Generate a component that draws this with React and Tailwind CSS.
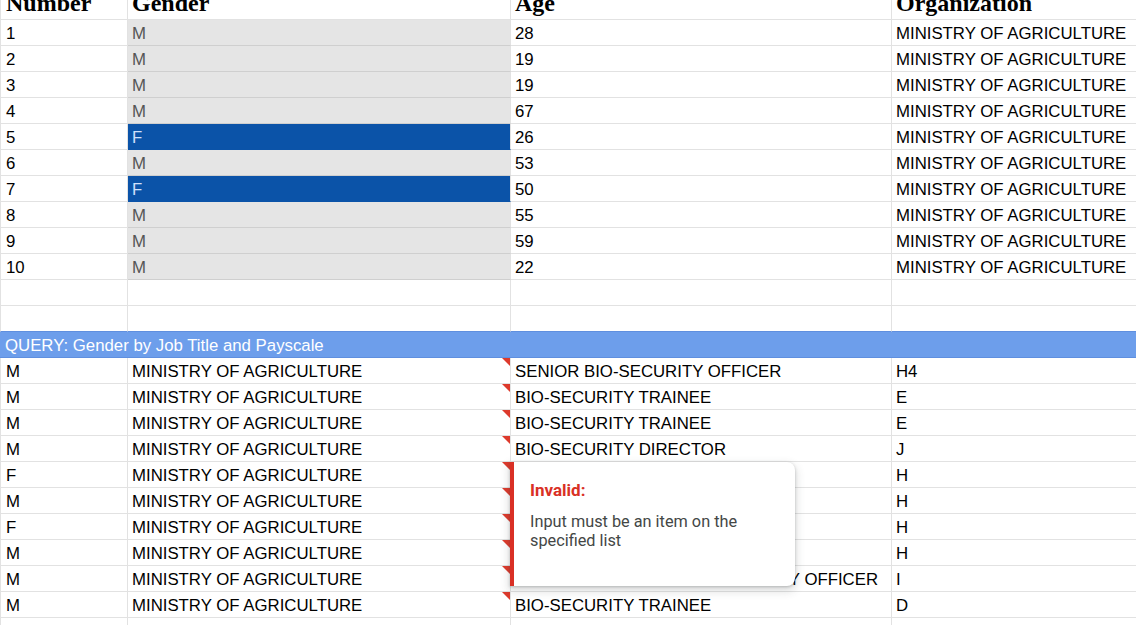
import React from "react";

const top = [
  ["1", "M", "28"],
  ["2", "M", "19"],
  ["3", "M", "19"],
  ["4", "M", "67"],
  ["5", "F", "26"],
  ["6", "M", "53"],
  ["7", "F", "50"],
  ["8", "M", "55"],
  ["9", "M", "59"],
  ["10", "M", "22"],
];

const bottom = [
  ["M", "SENIOR BIO-SECURITY OFFICER", "H4"],
  ["M", "BIO-SECURITY TRAINEE", "E"],
  ["M", "BIO-SECURITY TRAINEE", "E"],
  ["M", "BIO-SECURITY DIRECTOR", "J"],
  ["F", "", "H"],
  ["M", "", "H"],
  ["F", "", "H"],
  ["M", "", "H"],
  ["M", "SENIOR PRINCIPAL\u00a0 BIO-SECURITY OFFICER", "I"],
  ["M", "BIO-SECURITY TRAINEE", "D"],
];

const txt = "pl-[4px] pt-[5px] leading-[18px] text-[16.8px] whitespace-nowrap overflow-hidden";
const txtA = "pl-[5px] pt-[5px] leading-[18px] text-[16.8px] whitespace-nowrap overflow-hidden";

function Marker() {
  return (
    <div className="absolute top-0 right-0 w-0 h-0 border-t-[8px] border-l-[8px] border-t-[#dd3a2c] border-l-transparent" />
  );
}

export default function App() {
  return (
    <div className="relative w-[1136px] h-[625px] overflow-hidden bg-white text-black font-['Liberation_Sans',Arial,sans-serif]">
      {/* header row */}
      <div className="flex h-[20px] font-['Liberation_Serif',serif] font-bold text-[24px] leading-[24px]">
        <div className="w-[128px] shrink-0 border-l border-r border-b border-[#e2e2e2] pl-[5px] overflow-hidden">
          <div className="-mt-[9px]">Number</div>
        </div>
        <div className="w-[383px] shrink-0 border-r border-b border-[#e2e2e2] pl-[4px] overflow-hidden">
          <div className="-mt-[9px]">Gender</div>
        </div>
        <div className="w-[381px] shrink-0 border-r border-b border-[#e2e2e2] pl-[4px] overflow-hidden">
          <div className="-mt-[9px]">Age</div>
        </div>
        <div className="w-[260px] shrink-0 border-r border-b border-[#e2e2e2] pl-[4px] overflow-hidden">
          <div className="-mt-[9px]">Organization</div>
        </div>
      </div>

      {top.map(([n, g, a]) => (
        <div key={n} className="flex h-[26px]">
          <div className={`w-[128px] shrink-0 border-l border-r border-b border-[#e2e2e2] ${txtA}`}>{n}</div>
          {g === "F" ? (
            <div className={`w-[383px] shrink-0 border-r border-b border-[#0b53a8] border-r-[#e2e2e2] bg-[#0b53a8] text-[#cfe0fb] ${txt}`}>{g}</div>
          ) : (
            <div className={`w-[383px] shrink-0 border-r border-b border-[#cfcfcf] border-r-[#e2e2e2] bg-[#e5e5e5] text-[#555] ${txt}`}>{g}</div>
          )}
          <div className={`w-[381px] shrink-0 border-r border-b border-[#e2e2e2] ${txt}`}>{a}</div>
          <div className={`w-[260px] shrink-0 border-r border-b border-[#e2e2e2] ${txt}`}>MINISTRY OF AGRICULTURE</div>
        </div>
      ))}

      <div className="flex h-[26px]">
        <div className="w-[128px] shrink-0 border-l border-r border-b border-[#e2e2e2]" />
        <div className="w-[383px] shrink-0 border-r border-b border-[#e2e2e2]" />
        <div className="w-[381px] shrink-0 border-r border-b border-[#e2e2e2]" />
        <div className="w-[260px] shrink-0 border-r border-b border-[#e2e2e2]" />
      </div>
      <div className="flex h-[26px]">
        <div className="w-[128px] shrink-0 border-l border-r border-b border-[#e2e2e2] border-b-[#5f8fdf]" />
        <div className="w-[383px] shrink-0 border-r border-b border-[#e2e2e2] border-b-[#5f8fdf]" />
        <div className="w-[381px] shrink-0 border-r border-b border-[#e2e2e2] border-b-[#5f8fdf]" />
        <div className="w-[260px] shrink-0 border-r border-b border-[#e2e2e2] border-b-[#5f8fdf]" />
      </div>

      {/* query row */}
      <div className="flex h-[26px]">
        <div className={`w-[1152px] shrink-0 bg-[#6d9eeb] border-b border-[#5f8fdf] text-white ${txtA}`}>
          QUERY: Gender by Job Title and Payscale
        </div>
      </div>

      {bottom.map(([g, t, p], i) => (
        <div key={i} className="flex h-[26px]">
          <div className={`w-[128px] shrink-0 border-l border-r border-b border-[#e2e2e2] ${txtA}`}>{g}</div>
          <div className={`relative w-[383px] shrink-0 border-r border-b border-[#e2e2e2] ${txt}`}>
            MINISTRY OF AGRICULTURE
            <Marker />
          </div>
          <div className={`w-[381px] shrink-0 border-r border-b border-[#e2e2e2] ${txt}`}>{t}</div>
          <div className={`w-[260px] shrink-0 border-r border-b border-[#e2e2e2] ${txt}`}>{p}</div>
        </div>
      ))}
      <div className="flex h-[26px]">
        <div className="w-[128px] shrink-0 border-l border-r border-b border-[#e2e2e2]" />
        <div className="w-[383px] shrink-0 border-r border-b border-[#e2e2e2]" />
        <div className="w-[381px] shrink-0 border-r border-b border-[#e2e2e2]" />
        <div className="w-[260px] shrink-0 border-r border-b border-[#e2e2e2]" />
      </div>

      {/* validation popup */}
      <div className="absolute z-10 left-[510px] top-[462px] w-[285px] h-[124px] bg-white border-l-4 border-[#d93025] rounded-r-lg shadow-[0_4px_8px_2px_rgba(60,64,67,0.15),0_1px_3px_rgba(60,64,67,0.3)] pl-4 pr-5 pt-[18px] font-['Roboto',sans-serif]">
        <div className="text-[17px] leading-[20px] font-bold text-[#d93025]">Invalid:</div>
        <div className="mt-[12px] text-[16.3px] leading-[19px] text-[#444746]">
          Input must be an item on the specified list
        </div>
      </div>
    </div>
  );
}
